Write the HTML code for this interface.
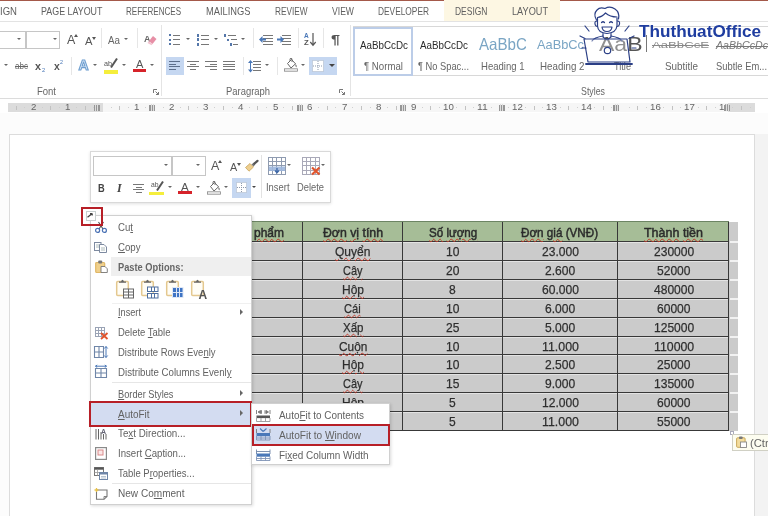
<!DOCTYPE html><html><head><meta charset="utf-8"><title>Word</title><style>
html,body{margin:0;padding:0;background:#fff;}
#root{will-change:transform;position:relative;width:768px;height:516px;overflow:hidden;background:#fff;font-family:"Liberation Sans",sans-serif;}
.a{position:absolute;box-sizing:border-box;}
.t{position:absolute;white-space:nowrap;transform-origin:0 50%;font-family:"Liberation Sans",sans-serif;}
svg{position:absolute;overflow:visible;}
u.w{text-decoration:underline wavy #c0392b;text-decoration-thickness:1px;text-underline-offset:1px;}

</style></head><body><div id="root">
<div class="a" style="left:0px;top:0px;width:444px;height:1.2px;background:#a4594a;"></div>
<div class="a" style="left:560px;top:0px;width:208px;height:1.2px;background:#a4594a;"></div>
<div class="a" style="left:444px;top:0px;width:116px;height:21px;background:#fdf7e3;"></div>
<div class="a" style="left:0px;top:21px;width:768px;height:1px;background:#e3e3e3;"></div>
<div class="a" style="left:0px;top:98px;width:768px;height:1px;background:#dcdcdc;"></div>
<span class="t" style="left:0px;top:4.0px;font-size:11px;line-height:14px;color:#606060;transform:scaleX(0.869);">IGN</span>
<span class="t" style="left:40.5px;top:4.0px;font-size:11px;line-height:14px;color:#606060;transform:scaleX(0.809);">PAGE LAYOUT</span>
<span class="t" style="left:126px;top:4.0px;font-size:11px;line-height:14px;color:#606060;transform:scaleX(0.732);">REFERENCES</span>
<span class="t" style="left:205.5px;top:4.0px;font-size:11px;line-height:14px;color:#606060;transform:scaleX(0.846);">MAILINGS</span>
<span class="t" style="left:274.5px;top:4.0px;font-size:11px;line-height:14px;color:#606060;transform:scaleX(0.749);">REVIEW</span>
<span class="t" style="left:332px;top:4.0px;font-size:11px;line-height:14px;color:#606060;transform:scaleX(0.782);">VIEW</span>
<span class="t" style="left:378px;top:4.0px;font-size:11px;line-height:14px;color:#606060;transform:scaleX(0.758);">DEVELOPER</span>
<span class="t" style="left:455px;top:4.0px;font-size:11px;line-height:14px;color:#606060;transform:scaleX(0.770);">DESIGN</span>
<span class="t" style="left:512px;top:4.0px;font-size:11px;line-height:14px;color:#606060;transform:scaleX(0.833);">LAYOUT</span>
<div class="a" style="left:161px;top:25px;width:1px;height:71px;background:#e4e4e4;"></div>
<div class="a" style="left:350px;top:25px;width:1px;height:71px;background:#e4e4e4;"></div>
<div class="a" style="left:0px;top:31px;width:26px;height:18px;background:#fff;border:1px solid #c6c6c6;border-left:none;"></div>
<div class="a" style="left:26px;top:31px;width:34px;height:18px;background:#fff;border:1px solid #c6c6c6;"></div>
<span class="t" style="left:37px;top:84.0px;font-size:10.5px;line-height:14px;color:#666;transform:scaleX(0.904);">Font</span>
<span class="t" style="left:226px;top:84.0px;font-size:10.5px;line-height:14px;color:#666;transform:scaleX(0.897);">Paragraph</span>
<span class="t" style="left:580.5px;top:84.0px;font-size:10.5px;line-height:14px;color:#666;transform:scaleX(0.839);">Styles</span>
<div class="a" style="left:165.5px;top:57px;width:18.5px;height:18px;background:#c5d7f1;"></div>
<div class="a" style="left:309px;top:57px;width:28px;height:18px;background:#c5d7f1;"></div>
<div class="a" style="left:352.5px;top:26px;width:415.5px;height:50px;background:#fff;border:1px solid #d8d8d8;border-right:none;"></div>
<div class="a" style="left:353px;top:26.5px;width:60px;height:49.0px;background:transparent;border:2.5px solid #bccde8;"></div>
<span class="t" style="left:359.5px;top:38.0px;font-size:11px;line-height:14px;color:#2a2a2a;transform:scaleX(0.892);">AaBbCcDc</span>
<span class="t" style="left:364px;top:58.5px;font-size:10.5px;line-height:14px;color:#666;transform:scaleX(0.920);">¶ Normal</span>
<span class="t" style="left:419.5px;top:38.0px;font-size:11px;line-height:14px;color:#2a2a2a;transform:scaleX(0.892);">AaBbCcDc</span>
<span class="t" style="left:418px;top:58.5px;font-size:10.5px;line-height:14px;color:#666;transform:scaleX(0.886);">¶ No Spac...</span>
<span class="t" style="left:479px;top:33.5px;font-size:16.5px;line-height:21px;color:#7aa5c4;transform:scaleX(0.917);clip-path:inset(0 15% 0 0);">AaBbCc</span>
<span class="t" style="left:481px;top:58.5px;font-size:10.5px;line-height:14px;color:#666;transform:scaleX(0.909);">Heading 1</span>
<span class="t" style="left:537px;top:36.0px;font-size:13px;line-height:17px;color:#7aa5c4;transform:scaleX(0.985);">AaBbCc</span>
<span class="t" style="left:540px;top:58.5px;font-size:10.5px;line-height:14px;color:#666;transform:scaleX(0.930);">Heading 2</span>
<span class="t" style="left:599px;top:30.0px;font-size:21px;line-height:27px;color:#555;transform:scaleX(1.096);">AaB</span>
<div class="a" style="left:645.5px;top:35px;width:1.0px;height:17px;background:#777;"></div>
<span class="t" style="left:614px;top:58.5px;font-size:10.5px;line-height:14px;color:#666;transform:scaleX(0.874);">Title</span>
<span class="t" style="left:652px;top:39.0px;font-size:9px;line-height:12px;color:#888;transform:scaleX(1.460);text-decoration:line-through;">AaBbCcE</span>
<span class="t" style="left:665px;top:58.5px;font-size:10.5px;line-height:14px;color:#666;transform:scaleX(0.942);">Subtitle</span>
<span class="t" style="left:716px;top:38.5px;font-size:10px;line-height:13px;color:#777;transform:scaleX(1.063);font-style:italic;text-decoration:line-through;">AaBbCcDc</span>
<span class="t" style="left:716px;top:58.5px;font-size:10.5px;line-height:14px;color:#666;transform:scaleX(0.892);">Subtle Em...</span>
<div class="a" style="left:17.2px;top:38.25px;width:0;height:0;border-top:2.5px solid #666;border-left:2.5px solid transparent;border-right:2.5px solid transparent;"></div>
<div class="a" style="left:52.5px;top:38.25px;width:0;height:0;border-top:2.5px solid #666;border-left:2.5px solid transparent;border-right:2.5px solid transparent;"></div>
<span class="t" style="left:66.7px;top:31.0px;font-size:13px;line-height:17px;color:#555;transform:scaleX(0.957);">A</span>
<svg style="left:74px;top:34px" width="4" height="3" viewBox="0 0 4 3"><path d="M0 3 L2 0 L4 3z" fill="#555"/></svg>
<span class="t" style="left:85px;top:34.0px;font-size:10.5px;line-height:14px;color:#555;transform:scaleX(1.069);">A</span>
<svg style="left:92px;top:36.5px" width="4" height="3" viewBox="0 0 4 3"><path d="M0 0 L4 0 L2 3z" fill="#555"/></svg>
<div class="a" style="left:101px;top:28px;width:1px;height:20px;background:#e6e6e6;"></div>
<span class="t" style="left:108px;top:32.5px;font-size:11px;line-height:14px;color:#666;transform:scaleX(0.891);">Aa</span>
<div class="a" style="left:123.8px;top:38.25px;width:0;height:0;border-top:2.5px solid #666;border-left:2.5px solid transparent;border-right:2.5px solid transparent;"></div>
<div class="a" style="left:136.5px;top:28px;width:1.0px;height:20px;background:#e6e6e6;"></div>
<svg style="left:144px;top:33px" width="13" height="13" viewBox="0 0 13 13"><text x="0" y="9" font-size="9" font-weight="bold" fill="#666" font-family="Liberation Sans, sans-serif">A</text><path d="M5 8 L9 3 L12.5 6 L8.5 11z" fill="#e78fa6"/><path d="M3.5 10 L5 8 L8.5 11 L7.5 12.3z" fill="#f3c4d0"/></svg>
<div class="a" style="left:169px;top:34px;width:2px;height:2px;background:#5577aa;"></div>
<div class="a" style="left:173px;top:34.5px;width:7px;height:1.0px;background:#777;"></div>
<div class="a" style="left:169px;top:38.5px;width:2px;height:2.0px;background:#5577aa;"></div>
<div class="a" style="left:173px;top:39.0px;width:7px;height:1.0px;background:#777;"></div>
<div class="a" style="left:169px;top:43px;width:2px;height:2px;background:#5577aa;"></div>
<div class="a" style="left:173px;top:43.5px;width:7px;height:1.0px;background:#777;"></div>
<div class="a" style="left:185.8px;top:38.25px;width:0;height:0;border-top:2.5px solid #666;border-left:2.5px solid transparent;border-right:2.5px solid transparent;"></div>
<div class="a" style="left:197px;top:33.5px;width:1.5px;height:3.0px;background:#5577aa;"></div>
<div class="a" style="left:201px;top:34.5px;width:8px;height:1.0px;background:#777;"></div>
<div class="a" style="left:197px;top:38.0px;width:1.5px;height:3.0px;background:#5577aa;"></div>
<div class="a" style="left:201px;top:39.0px;width:8px;height:1.0px;background:#777;"></div>
<div class="a" style="left:197px;top:42.5px;width:1.5px;height:3.0px;background:#5577aa;"></div>
<div class="a" style="left:201px;top:43.5px;width:8px;height:1.0px;background:#777;"></div>
<div class="a" style="left:214.2px;top:38.25px;width:0;height:0;border-top:2.5px solid #666;border-left:2.5px solid transparent;border-right:2.5px solid transparent;"></div>
<div class="a" style="left:224px;top:34px;width:1.5px;height:2.5px;background:#5577aa;"></div>
<div class="a" style="left:228px;top:34.5px;width:8px;height:1.0px;background:#777;"></div>
<div class="a" style="left:227px;top:38.5px;width:1.5px;height:2.5px;background:#5577aa;"></div>
<div class="a" style="left:231px;top:39px;width:6px;height:1px;background:#777;"></div>
<div class="a" style="left:230px;top:43px;width:1.5px;height:2.5px;background:#5577aa;"></div>
<div class="a" style="left:233px;top:43.5px;width:5px;height:1.0px;background:#777;"></div>
<div class="a" style="left:240.5px;top:38.25px;width:0;height:0;border-top:2.5px solid #666;border-left:2.5px solid transparent;border-right:2.5px solid transparent;"></div>
<div class="a" style="left:252.5px;top:28px;width:1.0px;height:20px;background:#e6e6e6;"></div>
<div class="a" style="left:263px;top:35.0px;width:10px;height:1.0px;background:#777;"></div>
<div class="a" style="left:263px;top:38.0px;width:10px;height:1.0px;background:#777;"></div>
<div class="a" style="left:263px;top:41.0px;width:10px;height:1.0px;background:#777;"></div>
<div class="a" style="left:263px;top:44.0px;width:10px;height:1.0px;background:#777;"></div>
<svg style="left:259px;top:36px" width="7" height="7" viewBox="0 0 7 7"><path d="M0 3.5 L3.5 0 L3.5 2.5 L7 2.5 L7 4.5 L3.5 4.5 L3.5 7z" fill="#4a78b8"/></svg>
<div class="a" style="left:281.5px;top:35.0px;width:9.5px;height:1.0px;background:#777;"></div>
<div class="a" style="left:281.5px;top:38.0px;width:9.5px;height:1.0px;background:#777;"></div>
<div class="a" style="left:281.5px;top:41.0px;width:9.5px;height:1.0px;background:#777;"></div>
<div class="a" style="left:281.5px;top:44.0px;width:9.5px;height:1.0px;background:#777;"></div>
<svg style="left:277px;top:36px" width="7" height="7" viewBox="0 0 7 7"><path d="M7 3.5 L3.5 0 L3.5 2.5 L0 2.5 L0 4.5 L3.5 4.5 L3.5 7z" fill="#4a78b8"/></svg>
<div class="a" style="left:297.5px;top:28px;width:1.0px;height:20px;background:#e6e6e6;"></div>
<span class="t" style="left:304.3px;top:31.0px;font-size:7.5px;line-height:10px;color:#4a78b8;transform:scaleX(0.867);font-weight:bold;">A</span>
<span class="t" style="left:304.3px;top:38.0px;font-size:7.5px;line-height:10px;color:#555;transform:scaleX(1.023);font-weight:bold;">Z</span>
<svg style="left:310px;top:33px" width="6" height="13" viewBox="0 0 6 13"><path d="M3 0 V12 M0.3 9 L3 12.3 L5.7 9" stroke="#555" stroke-width="1.2" fill="none"/></svg>
<div class="a" style="left:322.5px;top:28px;width:1.0px;height:20px;background:#e6e6e6;"></div>
<span class="t" style="left:331px;top:31.0px;font-size:13px;line-height:17px;color:#555;transform:scaleX(1.244);font-weight:bold;">¶</span>
<div class="a" style="left:4.2px;top:64.45px;width:0;height:0;border-top:2.5px solid #666;border-left:2.5px solid transparent;border-right:2.5px solid transparent;"></div>
<span class="t" style="left:15px;top:60.0px;font-size:9.5px;line-height:12px;color:#666;transform:scaleX(0.848);text-decoration:line-through;">abc</span>
<span class="t" style="left:35px;top:59.0px;font-size:11px;line-height:14px;color:#555;transform:scaleX(0.980);font-weight:bold;">x</span>
<span class="t" style="left:41.5px;top:65.5px;font-size:6px;line-height:8px;color:#4a78b8;transform:scaleX(0.957);">2</span>
<span class="t" style="left:53.7px;top:59.0px;font-size:11px;line-height:14px;color:#555;transform:scaleX(0.947);font-weight:bold;">x</span>
<span class="t" style="left:60px;top:57.5px;font-size:6px;line-height:8px;color:#4a78b8;transform:scaleX(0.897);">2</span>
<div class="a" style="left:71px;top:57px;width:1px;height:18px;background:#e6e6e6;"></div>
<svg style="left:78px;top:58px" width="12" height="14" viewBox="0 0 12 14"><text x="0.5" y="11.5" font-size="14" font-weight="bold" fill="#e8f1fb" stroke="#6f9fd0" stroke-width="1.1" font-family="Liberation Sans, sans-serif">A</text></svg>
<div class="a" style="left:92.5px;top:64.45px;width:0;height:0;border-top:2.5px solid #666;border-left:2.5px solid transparent;border-right:2.5px solid transparent;"></div>
<span class="t" style="left:104px;top:58.5px;font-size:8px;line-height:10px;color:#555;transform:scaleX(0.898);">ab</span>
<svg style="left:109px;top:58px" width="9" height="11" viewBox="0 0 9 11"><path d="M8 0.5 L2 9.5" stroke="#555" stroke-width="2"/></svg>
<div class="a" style="left:104px;top:69.5px;width:13.5px;height:4.0px;background:#f5ee3c;"></div>
<div class="a" style="left:122.2px;top:64.45px;width:0;height:0;border-top:2.5px solid #666;border-left:2.5px solid transparent;border-right:2.5px solid transparent;"></div>
<span class="t" style="left:135.8px;top:57.0px;font-size:11px;line-height:14px;color:#555;transform:scaleX(1.008);">A</span>
<div class="a" style="left:132.5px;top:68.7px;width:13.300000000000011px;height:3.0999999999999943px;background:#d6232a;"></div>
<div class="a" style="left:150.3px;top:64.45px;width:0;height:0;border-top:2.5px solid #666;border-left:2.5px solid transparent;border-right:2.5px solid transparent;"></div>
<svg style="left:152.5px;top:88.5px" width="6" height="6" viewBox="0 0 6 6"><path d="M0.5 4 V0.5 H4" stroke="#777" fill="none" stroke-width="1"/><path d="M2.5 2.5 L5.5 5.5 M5.5 3 V5.5 H3" stroke="#777" fill="none" stroke-width="1"/></svg>
<svg style="left:339px;top:88.5px" width="6" height="6" viewBox="0 0 6 6"><path d="M0.5 4 V0.5 H4" stroke="#777" fill="none" stroke-width="1"/><path d="M2.5 2.5 L5.5 5.5 M5.5 3 V5.5 H3" stroke="#777" fill="none" stroke-width="1"/></svg>
<div class="a" style="left:168.7px;top:60.5px;width:11.600000000000023px;height:1.0px;background:#5d6f8c;"></div>
<div class="a" style="left:168.7px;top:66.2px;width:11.600000000000023px;height:1.0px;background:#5d6f8c;"></div>
<div class="a" style="left:168.7px;top:63.5px;width:7.300000000000011px;height:1.0px;background:#5d6f8c;"></div>
<div class="a" style="left:168.7px;top:69.0px;width:7.300000000000011px;height:1.0px;background:#5d6f8c;"></div>
<div class="a" style="left:186.7px;top:60.5px;width:12.0px;height:1.0px;background:#777;"></div>
<div class="a" style="left:186.7px;top:66.2px;width:12.0px;height:1.0px;background:#777;"></div>
<div class="a" style="left:189.5px;top:63.5px;width:6.5px;height:1.0px;background:#777;"></div>
<div class="a" style="left:189.5px;top:69.0px;width:6.5px;height:1.0px;background:#777;"></div>
<div class="a" style="left:205px;top:60.5px;width:11.699999999999989px;height:1.0px;background:#777;"></div>
<div class="a" style="left:205px;top:66.2px;width:11.699999999999989px;height:1.0px;background:#777;"></div>
<div class="a" style="left:210px;top:63.5px;width:6.699999999999989px;height:1.0px;background:#777;"></div>
<div class="a" style="left:210px;top:69.0px;width:6.699999999999989px;height:1.0px;background:#777;"></div>
<div class="a" style="left:223.3px;top:60.5px;width:12.0px;height:1.0px;background:#777;"></div>
<div class="a" style="left:223.3px;top:63.5px;width:12.0px;height:1.0px;background:#777;"></div>
<div class="a" style="left:223.3px;top:66.2px;width:12.0px;height:1.0px;background:#777;"></div>
<div class="a" style="left:223.3px;top:69.0px;width:12.0px;height:1.0px;background:#777;"></div>
<div class="a" style="left:242.5px;top:57px;width:1.0px;height:18px;background:#e6e6e6;"></div>
<div class="a" style="left:253px;top:60.5px;width:8px;height:1.0px;background:#777;"></div>
<div class="a" style="left:253px;top:63.5px;width:8px;height:1.0px;background:#777;"></div>
<div class="a" style="left:253px;top:66.5px;width:8px;height:1.0px;background:#777;"></div>
<div class="a" style="left:253px;top:69.5px;width:8px;height:1.0px;background:#777;"></div>
<svg style="left:247.5px;top:59.5px" width="5" height="12.5" viewBox="0 0 5 12.5"><path d="M2.5 0 L5 3 H0z M2.5 12.5 L5 9.5 H0z" fill="#4a78b8"/><path d="M2.5 2 V10" stroke="#4a78b8" stroke-width="1"/></svg>
<div class="a" style="left:264.5px;top:64.45px;width:0;height:0;border-top:2.5px solid #666;border-left:2.5px solid transparent;border-right:2.5px solid transparent;"></div>
<div class="a" style="left:276.5px;top:57px;width:1.0px;height:18px;background:#e6e6e6;"></div>
<svg style="left:283.5px;top:57.5px" width="14" height="14" viewBox="0 0 14 14"><path d="M3.5 5.5 L7.5 1.5 L11.5 5.8 L7 10 z" fill="#fff" stroke="#666" stroke-width="1"/><path d="M6 3 V0.8 Q7 -0.2 8 0.8 V4" stroke="#666" fill="none" stroke-width="0.9"/><path d="M11.5 5.8 Q13.5 8 12.2 9.5 Q11 8.5 11.5 5.8z" fill="#666"/><rect x="0.5" y="10.8" width="13" height="2.4" fill="#f4f4f4" stroke="#888" stroke-width="0.8"/></svg>
<div class="a" style="left:301.0px;top:64.45px;width:0;height:0;border-top:2.5px solid #666;border-left:2.5px solid transparent;border-right:2.5px solid transparent;"></div>
<svg style="left:312px;top:59.5px" width="12" height="12" viewBox="0 0 12 12"><rect x="0.5" y="0.5" width="11" height="11" fill="#fff" stroke="#aab4c4" stroke-width="1" stroke-dasharray="1 1"/><path d="M6.0 1 V11 M1 6.0 H11" stroke="#8d99ad" stroke-width="1" stroke-dasharray="1 1"/></svg>
<div class="a" style="left:328.8px;top:64.2px;width:0;height:0;border-top:3px solid #444;border-left:3px solid transparent;border-right:3px solid transparent;"></div>
<svg style="left:580px;top:4px" width="58" height="62" viewBox="0 0 58 62"><g fill="none" stroke="#2b3f86" stroke-width="1.2" stroke-linecap="round" stroke-linejoin="round">
<path d="M16.5 16 Q13 10 17 6 Q20 2.5 25 4.5 Q30 1.5 35 5 Q40 8.5 38.5 15" />
<path d="M17.5 13.5 Q22 13 25.5 9 Q30 13 37 13" />
<path d="M17.5 14 V22 Q18 29 27 29.5 Q36 29 37 22 V14" fill="#fff"/>
<path d="M17 17 Q14.5 17 15 20 Q15.5 22.5 17.5 22.5 M37.5 17 Q40 17 39.5 20 Q39 22.5 37 22.5"/>
<path d="M22 23 H32 Q31.5 27.5 27 27.5 Q22.500 27.5 22 23z" fill="#fff"/>
<path d="M21.5 18.500 Q23 17 24.5 18.500 M29.500 18.500 Q31 17 32.500 18.500"/>
<path d="M23 29.500 V33 L27 36 L31 33 V29.500"/>
<path d="M23 32 Q14 33.500 12 37 M31 32 Q40 33.500 42 37"/>
<path d="M4 35 L47 35 L50 58 L8 58 Z" fill="#fff" fill-opacity="0.35"/>
<path d="M6 60 H52" stroke-width="1.8"/>
<circle cx="27.500" cy="46.500" r="3.200" fill="#fff"/>
<path d="M5 22 L9 27 M0 32 L5 34.500 M2 44 H6 M49 22 L45 27 M54 32 L49 34.500 M52 44 H56"/>
</g></svg>
<span class="t" style="left:638.5px;top:21.0px;font-size:16.5px;line-height:21px;color:#1f3da0;transform:scaleX(1.040);font-weight:bold;">ThuthuatOffice</span>
<div class="a" style="left:7.5px;top:102.5px;width:747.5px;height:9.5px;background:#f6f6f6;"></div>
<div class="a" style="left:7.5px;top:102.5px;width:95.5px;height:9.5px;background:#dcdcdc;"></div>
<div class="a" style="left:728px;top:102.5px;width:27px;height:9.5px;background:#dcdcdc;"></div>
<span class="t" style="left:30.839999999999993px;top:102.0px;font-size:8.5px;line-height:11px;color:#666;transform:scaleX(1.141);">2</span>
<span class="t" style="left:65.36999999999999px;top:102.0px;font-size:8.5px;line-height:11px;color:#666;transform:scaleX(1.141);">1</span>
<span class="t" style="left:134.43px;top:102.0px;font-size:8.5px;line-height:11px;color:#666;transform:scaleX(1.141);">1</span>
<span class="t" style="left:168.96px;top:102.0px;font-size:8.5px;line-height:11px;color:#666;transform:scaleX(1.141);">2</span>
<span class="t" style="left:203.49px;top:102.0px;font-size:8.5px;line-height:11px;color:#666;transform:scaleX(1.141);">3</span>
<span class="t" style="left:238.02px;top:102.0px;font-size:8.5px;line-height:11px;color:#666;transform:scaleX(1.141);">4</span>
<span class="t" style="left:272.55px;top:102.0px;font-size:8.5px;line-height:11px;color:#666;transform:scaleX(1.141);">5</span>
<span class="t" style="left:307.08px;top:102.0px;font-size:8.5px;line-height:11px;color:#666;transform:scaleX(1.141);">6</span>
<span class="t" style="left:341.61px;top:102.0px;font-size:8.5px;line-height:11px;color:#666;transform:scaleX(1.141);">7</span>
<span class="t" style="left:376.14000000000004px;top:102.0px;font-size:8.5px;line-height:11px;color:#666;transform:scaleX(1.141);">8</span>
<span class="t" style="left:410.67px;top:102.0px;font-size:8.5px;line-height:11px;color:#666;transform:scaleX(1.141);">9</span>
<span class="t" style="left:442.5px;top:102.0px;font-size:8.5px;line-height:11px;color:#666;transform:scaleX(1.141);">10</span>
<span class="t" style="left:477.0300000000001px;top:102.0px;font-size:8.5px;line-height:11px;color:#666;transform:scaleX(1.223);">11</span>
<span class="t" style="left:511.56000000000006px;top:102.0px;font-size:8.5px;line-height:11px;color:#666;transform:scaleX(1.141);">12</span>
<span class="t" style="left:546.09px;top:102.0px;font-size:8.5px;line-height:11px;color:#666;transform:scaleX(1.141);">13</span>
<span class="t" style="left:580.62px;top:102.0px;font-size:8.5px;line-height:11px;color:#666;transform:scaleX(1.141);">14</span>
<span class="t" style="left:649.6800000000001px;top:102.0px;font-size:8.5px;line-height:11px;color:#666;transform:scaleX(1.141);">16</span>
<span class="t" style="left:684.21px;top:102.0px;font-size:8.5px;line-height:11px;color:#666;transform:scaleX(1.141);">17</span>
<span class="t" style="left:718.74px;top:102.0px;font-size:8.5px;line-height:11px;color:#666;transform:scaleX(1.141);">18</span>
<div class="a" style="left:15.774999999999991px;top:105.5px;width:1.0px;height:4.0px;background:#c2c2c2;"></div>
<div class="a" style="left:24.4075px;top:107px;width:1.0px;height:1px;background:#cfcfcf;"></div>
<div class="a" style="left:41.67249999999999px;top:107px;width:1.0px;height:1px;background:#cfcfcf;"></div>
<div class="a" style="left:50.30499999999999px;top:105.5px;width:1.0px;height:4.0px;background:#c2c2c2;"></div>
<div class="a" style="left:58.93749999999999px;top:107px;width:1.0px;height:1px;background:#cfcfcf;"></div>
<div class="a" style="left:76.20249999999999px;top:107px;width:1.0px;height:1px;background:#cfcfcf;"></div>
<div class="a" style="left:84.835px;top:105.5px;width:1.0px;height:4.0px;background:#c2c2c2;"></div>
<div class="a" style="left:93.4675px;top:107px;width:1.0px;height:1px;background:#cfcfcf;"></div>
<div class="a" style="left:110.73249999999999px;top:107px;width:1.0px;height:1px;background:#cfcfcf;"></div>
<div class="a" style="left:119.365px;top:105.5px;width:1.0px;height:4.0px;background:#c2c2c2;"></div>
<div class="a" style="left:127.9975px;top:107px;width:1.0px;height:1px;background:#cfcfcf;"></div>
<div class="a" style="left:145.2625px;top:107px;width:1.0px;height:1px;background:#cfcfcf;"></div>
<div class="a" style="left:153.89499999999998px;top:105.5px;width:1.0px;height:4.0px;background:#c2c2c2;"></div>
<div class="a" style="left:162.5275px;top:107px;width:1.0px;height:1px;background:#cfcfcf;"></div>
<div class="a" style="left:179.7925px;top:107px;width:1.0px;height:1px;background:#cfcfcf;"></div>
<div class="a" style="left:188.425px;top:105.5px;width:1.0px;height:4.0px;background:#c2c2c2;"></div>
<div class="a" style="left:197.0575px;top:107px;width:1.0px;height:1px;background:#cfcfcf;"></div>
<div class="a" style="left:214.3225px;top:107px;width:1.0px;height:1px;background:#cfcfcf;"></div>
<div class="a" style="left:222.95499999999998px;top:105.5px;width:1.0px;height:4.0px;background:#c2c2c2;"></div>
<div class="a" style="left:231.5875px;top:107px;width:1.0px;height:1px;background:#cfcfcf;"></div>
<div class="a" style="left:248.8525px;top:107px;width:1.0px;height:1px;background:#cfcfcf;"></div>
<div class="a" style="left:257.485px;top:105.5px;width:1.0px;height:4.0px;background:#c2c2c2;"></div>
<div class="a" style="left:266.1175px;top:107px;width:1.0px;height:1px;background:#cfcfcf;"></div>
<div class="a" style="left:283.3825px;top:107px;width:1.0px;height:1px;background:#cfcfcf;"></div>
<div class="a" style="left:292.015px;top:105.5px;width:1.0px;height:4.0px;background:#c2c2c2;"></div>
<div class="a" style="left:300.64750000000004px;top:107px;width:1.0px;height:1px;background:#cfcfcf;"></div>
<div class="a" style="left:317.9125px;top:107px;width:1.0px;height:1px;background:#cfcfcf;"></div>
<div class="a" style="left:326.54499999999996px;top:105.5px;width:1.0px;height:4.0px;background:#c2c2c2;"></div>
<div class="a" style="left:335.1775px;top:107px;width:1.0px;height:1px;background:#cfcfcf;"></div>
<div class="a" style="left:352.4425px;top:107px;width:1.0px;height:1px;background:#cfcfcf;"></div>
<div class="a" style="left:361.07500000000005px;top:105.5px;width:1.0px;height:4.0px;background:#c2c2c2;"></div>
<div class="a" style="left:369.7075px;top:107px;width:1.0px;height:1px;background:#cfcfcf;"></div>
<div class="a" style="left:386.97249999999997px;top:107px;width:1.0px;height:1px;background:#cfcfcf;"></div>
<div class="a" style="left:395.605px;top:105.5px;width:1.0px;height:4.0px;background:#c2c2c2;"></div>
<div class="a" style="left:404.23749999999995px;top:107px;width:1.0px;height:1px;background:#cfcfcf;"></div>
<div class="a" style="left:421.50250000000005px;top:107px;width:1.0px;height:1px;background:#cfcfcf;"></div>
<div class="a" style="left:430.135px;top:105.5px;width:1.0px;height:4.0px;background:#c2c2c2;"></div>
<div class="a" style="left:438.76750000000004px;top:107px;width:1.0px;height:1px;background:#cfcfcf;"></div>
<div class="a" style="left:456.0325px;top:107px;width:1.0px;height:1px;background:#cfcfcf;"></div>
<div class="a" style="left:464.66499999999996px;top:105.5px;width:1.0px;height:4.0px;background:#c2c2c2;"></div>
<div class="a" style="left:473.2975px;top:107px;width:1.0px;height:1px;background:#cfcfcf;"></div>
<div class="a" style="left:490.5625px;top:107px;width:1.0px;height:1px;background:#cfcfcf;"></div>
<div class="a" style="left:499.19500000000005px;top:105.5px;width:1.0px;height:4.0px;background:#c2c2c2;"></div>
<div class="a" style="left:507.8275px;top:107px;width:1.0px;height:1px;background:#cfcfcf;"></div>
<div class="a" style="left:525.0925px;top:107px;width:1.0px;height:1px;background:#cfcfcf;"></div>
<div class="a" style="left:533.725px;top:105.5px;width:1.0px;height:4.0px;background:#c2c2c2;"></div>
<div class="a" style="left:542.3575px;top:107px;width:1.0px;height:1px;background:#cfcfcf;"></div>
<div class="a" style="left:559.6225000000001px;top:107px;width:1.0px;height:1px;background:#cfcfcf;"></div>
<div class="a" style="left:568.255px;top:105.5px;width:1.0px;height:4.0px;background:#c2c2c2;"></div>
<div class="a" style="left:576.8875px;top:107px;width:1.0px;height:1px;background:#cfcfcf;"></div>
<div class="a" style="left:594.1525px;top:107px;width:1.0px;height:1px;background:#cfcfcf;"></div>
<div class="a" style="left:602.785px;top:105.5px;width:1.0px;height:4.0px;background:#c2c2c2;"></div>
<div class="a" style="left:611.4175px;top:107px;width:1.0px;height:1px;background:#cfcfcf;"></div>
<div class="a" style="left:628.6825px;top:107px;width:1.0px;height:1px;background:#cfcfcf;"></div>
<div class="a" style="left:637.315px;top:105.5px;width:1.0px;height:4.0px;background:#c2c2c2;"></div>
<div class="a" style="left:645.9475px;top:107px;width:1.0px;height:1px;background:#cfcfcf;"></div>
<div class="a" style="left:663.2125000000001px;top:107px;width:1.0px;height:1px;background:#cfcfcf;"></div>
<div class="a" style="left:671.845px;top:105.5px;width:1.0px;height:4.0px;background:#c2c2c2;"></div>
<div class="a" style="left:680.4775000000001px;top:107px;width:1.0px;height:1px;background:#cfcfcf;"></div>
<div class="a" style="left:697.7425000000001px;top:107px;width:1.0px;height:1px;background:#cfcfcf;"></div>
<div class="a" style="left:706.375px;top:105.5px;width:1.0px;height:4.0px;background:#c2c2c2;"></div>
<div class="a" style="left:715.0075px;top:107px;width:1.0px;height:1px;background:#cfcfcf;"></div>
<div class="a" style="left:732.2725px;top:107px;width:1.0px;height:1px;background:#cfcfcf;"></div>
<div class="a" style="left:740.9050000000001px;top:105.5px;width:1.0px;height:4.0px;background:#c2c2c2;"></div>
<div class="a" style="left:749.5375px;top:107px;width:1.0px;height:1px;background:#cfcfcf;"></div>
<div class="a" style="left:93.5px;top:104.5px;width:6.0px;height:6.0px;background:#969696;"></div>
<div class="a" style="left:95.0px;top:104px;width:1.0px;height:7px;background:#ddd;"></div>
<div class="a" style="left:97.0px;top:104px;width:1.0px;height:7px;background:#ddd;"></div>
<div class="a" style="left:149px;top:104.5px;width:6px;height:6.0px;background:#969696;"></div>
<div class="a" style="left:150.5px;top:104px;width:1.0px;height:7px;background:#ddd;"></div>
<div class="a" style="left:152.5px;top:104px;width:1.0px;height:7px;background:#ddd;"></div>
<div class="a" style="left:297px;top:104.5px;width:6px;height:6.0px;background:#969696;"></div>
<div class="a" style="left:298.5px;top:104px;width:1.0px;height:7px;background:#ddd;"></div>
<div class="a" style="left:300.5px;top:104px;width:1.0px;height:7px;background:#ddd;"></div>
<div class="a" style="left:400px;top:104.5px;width:6px;height:6.0px;background:#969696;"></div>
<div class="a" style="left:401.5px;top:104px;width:1.0px;height:7px;background:#ddd;"></div>
<div class="a" style="left:403.5px;top:104px;width:1.0px;height:7px;background:#ddd;"></div>
<div class="a" style="left:498.5px;top:104.5px;width:6.0px;height:6.0px;background:#969696;"></div>
<div class="a" style="left:500.0px;top:104px;width:1.0px;height:7px;background:#ddd;"></div>
<div class="a" style="left:502.0px;top:104px;width:1.0px;height:7px;background:#ddd;"></div>
<div class="a" style="left:613px;top:104.5px;width:6px;height:6.0px;background:#969696;"></div>
<div class="a" style="left:614.5px;top:104px;width:1.0px;height:7px;background:#ddd;"></div>
<div class="a" style="left:616.5px;top:104px;width:1.0px;height:7px;background:#ddd;"></div>
<div class="a" style="left:724px;top:104.5px;width:6px;height:6.0px;background:#969696;"></div>
<div class="a" style="left:725.5px;top:104px;width:1.0px;height:7px;background:#ddd;"></div>
<div class="a" style="left:727.5px;top:104px;width:1.0px;height:7px;background:#ddd;"></div>
<div class="a" style="left:0px;top:113px;width:768px;height:403px;background:#fcfcfc;"></div>
<div class="a" style="left:9px;top:134px;width:746px;height:396px;background:#fff;border:1px solid #dcdcdc;"></div>
<div class="a" style="left:755px;top:134px;width:13px;height:382px;background:#f3f3f3;"></div>
<div class="a" style="left:200px;top:222px;width:529px;height:19px;background:#a6bd97;"></div>
<div class="a" style="left:200px;top:241px;width:537.5px;height:189.5px;background:#cbcbcb;"></div>
<div class="a" style="left:729px;top:222px;width:8.5px;height:19px;background:#cbcbcb;"></div>
<div class="a" style="left:200px;top:221.3px;width:529px;height:1.1999999999999886px;background:#6d8564;"></div>
<div class="a" style="left:200px;top:240.5px;width:529px;height:1.0999999999999943px;background:#383838;"></div>
<div class="a" style="left:200px;top:241.6px;width:529px;height:1.0px;background:#e3e3e3;"></div>
<div class="a" style="left:200px;top:259.5px;width:529px;height:1.1000000000000227px;background:#383838;"></div>
<div class="a" style="left:200px;top:260.6px;width:529px;height:1.0px;background:#e3e3e3;"></div>
<div class="a" style="left:200px;top:278.5px;width:529px;height:1.1000000000000227px;background:#383838;"></div>
<div class="a" style="left:200px;top:279.6px;width:529px;height:1.0px;background:#e3e3e3;"></div>
<div class="a" style="left:200px;top:297.5px;width:529px;height:1.1000000000000227px;background:#383838;"></div>
<div class="a" style="left:200px;top:298.6px;width:529px;height:1.0px;background:#e3e3e3;"></div>
<div class="a" style="left:200px;top:316.5px;width:529px;height:1.1000000000000227px;background:#383838;"></div>
<div class="a" style="left:200px;top:317.6px;width:529px;height:1.0px;background:#e3e3e3;"></div>
<div class="a" style="left:200px;top:335.5px;width:529px;height:1.1000000000000227px;background:#383838;"></div>
<div class="a" style="left:200px;top:336.6px;width:529px;height:1.0px;background:#e3e3e3;"></div>
<div class="a" style="left:200px;top:354.0px;width:529px;height:1.1000000000000227px;background:#383838;"></div>
<div class="a" style="left:200px;top:355.1px;width:529px;height:1.0px;background:#e3e3e3;"></div>
<div class="a" style="left:200px;top:373.0px;width:529px;height:1.1000000000000227px;background:#383838;"></div>
<div class="a" style="left:200px;top:374.1px;width:529px;height:1.0px;background:#e3e3e3;"></div>
<div class="a" style="left:200px;top:391.5px;width:529px;height:1.1000000000000227px;background:#383838;"></div>
<div class="a" style="left:200px;top:392.6px;width:529px;height:1.0px;background:#e3e3e3;"></div>
<div class="a" style="left:200px;top:410.5px;width:529px;height:1.1000000000000227px;background:#383838;"></div>
<div class="a" style="left:200px;top:411.6px;width:529px;height:1.0px;background:#e3e3e3;"></div>
<div class="a" style="left:200px;top:429.5px;width:529px;height:1.1000000000000227px;background:#383838;"></div>
<div class="a" style="left:729.5px;top:240.5px;width:8.0px;height:2.0999999999999943px;background:#f2f2f2;"></div>
<div class="a" style="left:729.5px;top:259.5px;width:8.0px;height:2.1000000000000227px;background:#f2f2f2;"></div>
<div class="a" style="left:729.5px;top:278.5px;width:8.0px;height:2.1000000000000227px;background:#f2f2f2;"></div>
<div class="a" style="left:729.5px;top:297.5px;width:8.0px;height:2.1000000000000227px;background:#f2f2f2;"></div>
<div class="a" style="left:729.5px;top:316.5px;width:8.0px;height:2.1000000000000227px;background:#f2f2f2;"></div>
<div class="a" style="left:729.5px;top:335.5px;width:8.0px;height:2.1000000000000227px;background:#f2f2f2;"></div>
<div class="a" style="left:729.5px;top:354.0px;width:8.0px;height:2.1000000000000227px;background:#f2f2f2;"></div>
<div class="a" style="left:729.5px;top:373.0px;width:8.0px;height:2.1000000000000227px;background:#f2f2f2;"></div>
<div class="a" style="left:729.5px;top:391.5px;width:8.0px;height:2.1000000000000227px;background:#f2f2f2;"></div>
<div class="a" style="left:729.5px;top:410.5px;width:8.0px;height:2.1000000000000227px;background:#f2f2f2;"></div>
<div class="a" style="left:302px;top:222px;width:1px;height:208.5px;background:#383838;"></div>
<div class="a" style="left:402px;top:222px;width:1px;height:208.5px;background:#383838;"></div>
<div class="a" style="left:502px;top:222px;width:1px;height:208.5px;background:#383838;"></div>
<div class="a" style="left:617px;top:222px;width:1px;height:208.5px;background:#383838;"></div>
<div class="a" style="left:728px;top:222px;width:1px;height:208.5px;background:#383838;"></div>
<span class="t" style="left:254px;top:223.5px;font-size:13px;line-height:17px;color:#2c2c2c;transform:scaleX(0.922);-webkit-text-stroke:0.5px #2c2c2c;"><u class="w">phẩm</u></span>
<span class="t" style="left:323px;top:223.5px;font-size:13px;line-height:17px;color:#2c2c2c;transform:scaleX(0.945);-webkit-text-stroke:0.5px #2c2c2c;"><u class="w">Đơn</u> <u class="w">vị</u> <u class="w">tính</u></span>
<span class="t" style="left:428.75px;top:223.5px;font-size:13px;line-height:17px;color:#2c2c2c;transform:scaleX(0.892);-webkit-text-stroke:0.5px #2c2c2c;"><u class="w">Số</u> <u class="w">lượng</u></span>
<span class="t" style="left:521px;top:223.5px;font-size:13px;line-height:17px;color:#2c2c2c;transform:scaleX(0.897);-webkit-text-stroke:0.5px #2c2c2c;"><u class="w">Đơn</u> <u class="w">giá</u> (VNĐ)</span>
<span class="t" style="left:644px;top:223.5px;font-size:13px;line-height:17px;color:#2c2c2c;transform:scaleX(0.960);-webkit-text-stroke:0.5px #2c2c2c;"><u class="w">Thành</u> <u class="w">tiền</u></span>
<span class="t" style="left:335.05px;top:242.8px;font-size:13.5px;line-height:18px;color:#2e2e2e;transform:scaleX(0.892);-webkit-text-stroke:0.25px #2e2e2e;"><u class="w">Quyển</u></span>
<span class="t" style="left:446.1px;top:242.8px;font-size:13.5px;line-height:18px;color:#2e2e2e;transform:scaleX(0.891);-webkit-text-stroke:0.25px #2e2e2e;">10</span>
<span class="t" style="left:541.75px;top:242.8px;font-size:13.5px;line-height:18px;color:#2e2e2e;transform:scaleX(0.894);-webkit-text-stroke:0.25px #2e2e2e;">23.000</span>
<span class="t" style="left:654.1px;top:242.8px;font-size:13.5px;line-height:18px;color:#2e2e2e;transform:scaleX(0.892);-webkit-text-stroke:0.25px #2e2e2e;">230000</span>
<span class="t" style="left:343.05px;top:261.8px;font-size:13.5px;line-height:18px;color:#2e2e2e;transform:scaleX(0.812);-webkit-text-stroke:0.25px #2e2e2e;"><u class="w">Cây</u></span>
<span class="t" style="left:446.1px;top:261.8px;font-size:13.5px;line-height:18px;color:#2e2e2e;transform:scaleX(0.891);-webkit-text-stroke:0.25px #2e2e2e;">20</span>
<span class="t" style="left:545.1px;top:261.8px;font-size:13.5px;line-height:18px;color:#2e2e2e;transform:scaleX(0.894);-webkit-text-stroke:0.25px #2e2e2e;">2.600</span>
<span class="t" style="left:657.45px;top:261.8px;font-size:13.5px;line-height:18px;color:#2e2e2e;transform:scaleX(0.892);-webkit-text-stroke:0.25px #2e2e2e;">52000</span>
<span class="t" style="left:341.8px;top:280.8px;font-size:13.5px;line-height:18px;color:#2e2e2e;transform:scaleX(0.888);-webkit-text-stroke:0.25px #2e2e2e;"><u class="w">Hộp</u></span>
<span class="t" style="left:449.45px;top:280.8px;font-size:13.5px;line-height:18px;color:#2e2e2e;transform:scaleX(0.891);-webkit-text-stroke:0.25px #2e2e2e;">8</span>
<span class="t" style="left:541.75px;top:280.8px;font-size:13.5px;line-height:18px;color:#2e2e2e;transform:scaleX(0.894);-webkit-text-stroke:0.25px #2e2e2e;">60.000</span>
<span class="t" style="left:654.1px;top:280.8px;font-size:13.5px;line-height:18px;color:#2e2e2e;transform:scaleX(0.892);-webkit-text-stroke:0.25px #2e2e2e;">480000</span>
<span class="t" style="left:344.45px;top:299.8px;font-size:13.5px;line-height:18px;color:#2e2e2e;transform:scaleX(0.824);-webkit-text-stroke:0.25px #2e2e2e;"><u class="w">Cái</u></span>
<span class="t" style="left:446.1px;top:299.8px;font-size:13.5px;line-height:18px;color:#2e2e2e;transform:scaleX(0.891);-webkit-text-stroke:0.25px #2e2e2e;">10</span>
<span class="t" style="left:545.1px;top:299.8px;font-size:13.5px;line-height:18px;color:#2e2e2e;transform:scaleX(0.894);-webkit-text-stroke:0.25px #2e2e2e;">6.000</span>
<span class="t" style="left:657.45px;top:299.8px;font-size:13.5px;line-height:18px;color:#2e2e2e;transform:scaleX(0.892);-webkit-text-stroke:0.25px #2e2e2e;">60000</span>
<span class="t" style="left:342.55px;top:318.8px;font-size:13.5px;line-height:18px;color:#2e2e2e;transform:scaleX(0.853);-webkit-text-stroke:0.25px #2e2e2e;"><u class="w">Xấp</u></span>
<span class="t" style="left:446.1px;top:318.8px;font-size:13.5px;line-height:18px;color:#2e2e2e;transform:scaleX(0.891);-webkit-text-stroke:0.25px #2e2e2e;">25</span>
<span class="t" style="left:545.1px;top:318.8px;font-size:13.5px;line-height:18px;color:#2e2e2e;transform:scaleX(0.894);-webkit-text-stroke:0.25px #2e2e2e;">5.000</span>
<span class="t" style="left:654.1px;top:318.8px;font-size:13.5px;line-height:18px;color:#2e2e2e;transform:scaleX(0.892);-webkit-text-stroke:0.25px #2e2e2e;">125000</span>
<span class="t" style="left:338.6px;top:337.6px;font-size:13.5px;line-height:18px;color:#2e2e2e;transform:scaleX(0.880);-webkit-text-stroke:0.25px #2e2e2e;"><u class="w">Cuộn</u></span>
<span class="t" style="left:446.1px;top:337.6px;font-size:13.5px;line-height:18px;color:#2e2e2e;transform:scaleX(0.891);-webkit-text-stroke:0.25px #2e2e2e;">10</span>
<span class="t" style="left:541.75px;top:337.6px;font-size:13.5px;line-height:18px;color:#2e2e2e;transform:scaleX(0.916);-webkit-text-stroke:0.25px #2e2e2e;">11.000</span>
<span class="t" style="left:654.1px;top:337.6px;font-size:13.5px;line-height:18px;color:#2e2e2e;transform:scaleX(0.913);-webkit-text-stroke:0.25px #2e2e2e;">110000</span>
<span class="t" style="left:341.8px;top:356.3px;font-size:13.5px;line-height:18px;color:#2e2e2e;transform:scaleX(0.888);-webkit-text-stroke:0.25px #2e2e2e;"><u class="w">Hộp</u></span>
<span class="t" style="left:446.1px;top:356.3px;font-size:13.5px;line-height:18px;color:#2e2e2e;transform:scaleX(0.891);-webkit-text-stroke:0.25px #2e2e2e;">10</span>
<span class="t" style="left:545.1px;top:356.3px;font-size:13.5px;line-height:18px;color:#2e2e2e;transform:scaleX(0.894);-webkit-text-stroke:0.25px #2e2e2e;">2.500</span>
<span class="t" style="left:657.45px;top:356.3px;font-size:13.5px;line-height:18px;color:#2e2e2e;transform:scaleX(0.892);-webkit-text-stroke:0.25px #2e2e2e;">25000</span>
<span class="t" style="left:343.05px;top:375.1px;font-size:13.5px;line-height:18px;color:#2e2e2e;transform:scaleX(0.812);-webkit-text-stroke:0.25px #2e2e2e;"><u class="w">Cây</u></span>
<span class="t" style="left:446.1px;top:375.1px;font-size:13.5px;line-height:18px;color:#2e2e2e;transform:scaleX(0.891);-webkit-text-stroke:0.25px #2e2e2e;">15</span>
<span class="t" style="left:545.1px;top:375.1px;font-size:13.5px;line-height:18px;color:#2e2e2e;transform:scaleX(0.894);-webkit-text-stroke:0.25px #2e2e2e;">9.000</span>
<span class="t" style="left:654.1px;top:375.1px;font-size:13.5px;line-height:18px;color:#2e2e2e;transform:scaleX(0.892);-webkit-text-stroke:0.25px #2e2e2e;">135000</span>
<span class="t" style="left:341.8px;top:393.8px;font-size:13.5px;line-height:18px;color:#2e2e2e;transform:scaleX(0.888);-webkit-text-stroke:0.25px #2e2e2e;"><u class="w">Hộp</u></span>
<span class="t" style="left:449.45px;top:393.8px;font-size:13.5px;line-height:18px;color:#2e2e2e;transform:scaleX(0.891);-webkit-text-stroke:0.25px #2e2e2e;">5</span>
<span class="t" style="left:541.75px;top:393.8px;font-size:13.5px;line-height:18px;color:#2e2e2e;transform:scaleX(0.894);-webkit-text-stroke:0.25px #2e2e2e;">12.000</span>
<span class="t" style="left:657.45px;top:393.8px;font-size:13.5px;line-height:18px;color:#2e2e2e;transform:scaleX(0.892);-webkit-text-stroke:0.25px #2e2e2e;">60000</span>
<span class="t" style="left:449.45px;top:412.8px;font-size:13.5px;line-height:18px;color:#2e2e2e;transform:scaleX(0.891);-webkit-text-stroke:0.25px #2e2e2e;">5</span>
<span class="t" style="left:541.75px;top:412.8px;font-size:13.5px;line-height:18px;color:#2e2e2e;transform:scaleX(0.916);-webkit-text-stroke:0.25px #2e2e2e;">11.000</span>
<span class="t" style="left:657.45px;top:412.8px;font-size:13.5px;line-height:18px;color:#2e2e2e;transform:scaleX(0.892);-webkit-text-stroke:0.25px #2e2e2e;">55000</span>
<div class="a" style="left:730px;top:430.5px;width:3.5px;height:4.5px;background:#fff;border:1px solid #aab;"></div>
<div class="a" style="left:732px;top:434px;width:38px;height:17px;background:#fdfdf0;border:1px solid #d0d0c4;"></div>
<svg style="left:736px;top:436px" width="11" height="12" viewBox="0 0 11 12"><rect x="0.6" y="1.8" width="8.5" height="9.5" rx="1" fill="#f3dc9c" stroke="#c9a85a" stroke-width="1"/><rect x="3" y="0.4" width="3.6" height="2.6" rx="0.8" fill="#777"/><rect x="4.5" y="6" width="6" height="5.5" fill="#fff" stroke="#888" stroke-width="0.9"/></svg>
<span class="t" style="left:750px;top:435.5px;font-size:11px;line-height:14px;color:#666;transform:scaleX(1.023);">(Ctrl)</span>
<div class="a" style="left:89.5px;top:150.5px;width:241.0px;height:52.0px;background:#fff;border:1px solid #d9d9d9;box-shadow:0 1px 3px rgba(0,0,0,0.12);"></div>
<div class="a" style="left:93px;top:155.5px;width:79px;height:20.0px;background:#fff;border:1px solid #c6c6c6;"></div>
<div class="a" style="left:172px;top:155.5px;width:33.5px;height:20.0px;background:#fff;border:1px solid #c6c6c6;"></div>
<div class="a" style="left:261px;top:155px;width:1px;height:43px;background:#e2e2e2;"></div>
<div class="a" style="left:232px;top:177.5px;width:18.5px;height:20.0px;background:#c5d7f1;"></div>
<div class="a" style="left:163.5px;top:163.75px;width:0;height:0;border-top:2.5px solid #666;border-left:2.5px solid transparent;border-right:2.5px solid transparent;"></div>
<div class="a" style="left:196.3px;top:163.75px;width:0;height:0;border-top:2.5px solid #666;border-left:2.5px solid transparent;border-right:2.5px solid transparent;"></div>
<span class="t" style="left:210.7px;top:157.0px;font-size:13px;line-height:17px;color:#555;transform:scaleX(0.957);">A</span>
<svg style="left:218px;top:160px" width="4" height="3" viewBox="0 0 4 3"><path d="M0 3 L2 0 L4 3z" fill="#555"/></svg>
<span class="t" style="left:229.8px;top:160.0px;font-size:10.5px;line-height:14px;color:#555;transform:scaleX(1.026);">A</span>
<svg style="left:236.5px;top:162.5px" width="4" height="3" viewBox="0 0 4 3"><path d="M0 0 L4 0 L2 3z" fill="#555"/></svg>
<svg style="left:244.5px;top:159.5px" width="14" height="12" viewBox="0 0 14 12"><path d="M0.5 7.5 L5 3.5 L8.5 7 L4 11.2z" fill="#eecf8f" stroke="#c9a55c" stroke-width="0.8"/><path d="M6.5 4.5 L8.5 2.8 L10.3 4.6 L8.6 6.5z" fill="#777"/><path d="M9.3 3.6 L12.5 0.8" stroke="#555" stroke-width="2.2" stroke-linecap="round"/></svg>
<svg style="left:267.5px;top:157px" width="18" height="18" viewBox="0 0 18 18"><rect x="0.5" y="0.5" width="17" height="17" fill="#fff" stroke="#8f9bb0" stroke-width="1"/><path d="M4.5 0.5 V17.5" stroke="#8f9bb0" stroke-width="1"/><path d="M8.5 0.5 V17.5" stroke="#8f9bb0" stroke-width="1"/><path d="M13.5 0.5 V17.5" stroke="#8f9bb0" stroke-width="1"/><path d="M0.5 4.5 H17.5" stroke="#8f9bb0" stroke-width="1"/><path d="M0.5 8.5 H17.5" stroke="#8f9bb0" stroke-width="1"/><path d="M0.5 13.5 H17.5" stroke="#8f9bb0" stroke-width="1"/><rect x="1" y="9.5" width="16" height="4.5" fill="#9db7de" opacity="0.9"/><path d="M9 11 V15 M7 13.5 L9 15.8 L11 13.5" stroke="#3e68a8" stroke-width="1.3" fill="none"/></svg>
<div class="a" style="left:286.8px;top:164.25px;width:0;height:0;border-top:2.5px solid #666;border-left:2.5px solid transparent;border-right:2.5px solid transparent;"></div>
<svg style="left:301.5px;top:157px" width="18" height="18" viewBox="0 0 18 18"><rect x="0.5" y="0.5" width="17" height="17" fill="#fff" stroke="#a9a9b8" stroke-width="1"/><path d="M4.5 0.5 V17.5" stroke="#a9a9b8" stroke-width="1"/><path d="M8.5 0.5 V17.5" stroke="#a9a9b8" stroke-width="1"/><path d="M13.5 0.5 V17.5" stroke="#a9a9b8" stroke-width="1"/><path d="M0.5 4.5 H17.5" stroke="#a9a9b8" stroke-width="1"/><path d="M0.5 8.5 H17.5" stroke="#a9a9b8" stroke-width="1"/><path d="M0.5 13.5 H17.5" stroke="#a9a9b8" stroke-width="1"/><path d="M10 10.5 L17.5 17.5 M17.5 10.5 L10 17.5" stroke="#e0542c" stroke-width="2.2"/></svg>
<div class="a" style="left:321.2px;top:164.25px;width:0;height:0;border-top:2.5px solid #666;border-left:2.5px solid transparent;border-right:2.5px solid transparent;"></div>
<div class="a" style="left:133.3px;top:184.0px;width:10.5px;height:1.0px;background:#777;"></div>
<div class="a" style="left:133.3px;top:189.0px;width:10.5px;height:1.0px;background:#777;"></div>
<div class="a" style="left:135.5px;top:186.5px;width:6.0px;height:1.0px;background:#777;"></div>
<div class="a" style="left:135.5px;top:191.5px;width:6.0px;height:1.0px;background:#777;"></div>
<span class="t" style="left:150.5px;top:180.0px;font-size:8px;line-height:10px;color:#555;transform:scaleX(0.842);">ab</span>
<svg style="left:155px;top:180.5px" width="9" height="11" viewBox="0 0 9 11"><path d="M8 0.5 L2 9.5" stroke="#555" stroke-width="2"/></svg>
<div class="a" style="left:149px;top:191.5px;width:15px;height:3.5px;background:#f5ee3c;"></div>
<div class="a" style="left:167.5px;top:185.75px;width:0;height:0;border-top:2.5px solid #666;border-left:2.5px solid transparent;border-right:2.5px solid transparent;"></div>
<span class="t" style="left:181.3px;top:179.5px;font-size:10.5px;line-height:14px;color:#555;transform:scaleX(1.098);">A</span>
<div class="a" style="left:178px;top:191px;width:13.699999999999989px;height:3.3000000000000114px;background:#d6232a;"></div>
<div class="a" style="left:195.8px;top:185.75px;width:0;height:0;border-top:2.5px solid #666;border-left:2.5px solid transparent;border-right:2.5px solid transparent;"></div>
<svg style="left:206.5px;top:181px" width="14" height="14" viewBox="0 0 14 14"><path d="M3.5 5.5 L7.5 1.5 L11.5 5.8 L7 10 z" fill="#fff" stroke="#666" stroke-width="1"/><path d="M6 3 V0.8 Q7 -0.2 8 0.8 V4" stroke="#666" fill="none" stroke-width="0.9"/><path d="M11.5 5.8 Q13.5 8 12.2 9.5 Q11 8.5 11.5 5.8z" fill="#666"/><rect x="0.5" y="10.8" width="13" height="2.4" fill="#f4f4f4" stroke="#888" stroke-width="0.8"/></svg>
<div class="a" style="left:224.0px;top:185.75px;width:0;height:0;border-top:2.5px solid #666;border-left:2.5px solid transparent;border-right:2.5px solid transparent;"></div>
<svg style="left:235.5px;top:182px" width="11" height="11" viewBox="0 0 11 11"><rect x="0.5" y="0.5" width="10" height="10" fill="#fff" stroke="#aab4c4" stroke-width="1" stroke-dasharray="1 1"/><path d="M5.5 1 V10 M1 5.5 H10" stroke="#8d99ad" stroke-width="1" stroke-dasharray="1 1"/></svg>
<div class="a" style="left:252.0px;top:185.6px;width:0;height:0;border-top:2.8px solid #444;border-left:2.8px solid transparent;border-right:2.8px solid transparent;"></div>
<span class="t" style="left:98px;top:180.5px;font-size:10.5px;line-height:14px;color:#444;transform:scaleX(0.882);font-weight:bold;">B</span>
<span class="t" style="left:117px;top:179.5px;font-size:12px;line-height:16px;color:#444;transform:scaleX(1.000);font-style:italic;font-weight:bold;font-family:'Liberation Serif',serif;">I</span>
<span class="t" style="left:265.5px;top:180.0px;font-size:10.5px;line-height:14px;color:#666;transform:scaleX(0.895);">Insert</span>
<span class="t" style="left:297px;top:180.0px;font-size:10.5px;line-height:14px;color:#666;transform:scaleX(0.889);">Delete</span>
<div class="a" style="left:89.5px;top:215px;width:162.5px;height:289.5px;background:#fff;border:1px solid #d0d0d0;box-shadow:1px 1px 3px rgba(0,0,0,0.15);"></div>
<div class="a" style="left:111px;top:257px;width:140px;height:19px;background:#efefef;"></div>
<div class="a" style="left:112px;top:382px;width:139px;height:1px;background:#e6e6e6;"></div>
<div class="a" style="left:112px;top:483px;width:139px;height:1px;background:#e6e6e6;"></div>
<div class="a" style="left:88.7px;top:400.7px;width:163.3px;height:26.0px;background:#d3dcf1;border:2.6px solid #b71f27;"></div>
<span class="t" style="left:117.5px;top:220.0px;font-size:11px;line-height:14px;color:#626262;transform:scaleX(0.876);">Cu<u>t</u></span>
<span class="t" style="left:117.5px;top:239.5px;font-size:11px;line-height:14px;color:#626262;transform:scaleX(0.875);"><u>C</u>opy</span>
<span class="t" style="left:117.5px;top:259.5px;font-size:11px;line-height:14px;color:#666;transform:scaleX(0.844);font-weight:bold;">Paste Options:</span>
<span class="t" style="left:117.5px;top:305.0px;font-size:11px;line-height:14px;color:#626262;transform:scaleX(0.835);"><u>I</u>nsert</span>
<span class="t" style="left:117.5px;top:325.0px;font-size:11px;line-height:14px;color:#626262;transform:scaleX(0.861);">Delete <u>T</u>able</span>
<span class="t" style="left:117.5px;top:345.0px;font-size:11px;line-height:14px;color:#626262;transform:scaleX(0.862);">Distribute Rows Eve<u>n</u>ly</span>
<span class="t" style="left:117.5px;top:365.0px;font-size:11px;line-height:14px;color:#626262;transform:scaleX(0.880);">Distribute Columns Evenl<u>y</u></span>
<span class="t" style="left:117.5px;top:386.5px;font-size:11px;line-height:14px;color:#626262;transform:scaleX(0.840);"><u>B</u>order Styles</span>
<span class="t" style="left:117.5px;top:407.0px;font-size:11px;line-height:14px;color:#626262;transform:scaleX(0.904);"><u>A</u>utoFit</span>
<span class="t" style="left:117.5px;top:426.0px;font-size:11px;line-height:14px;color:#626262;transform:scaleX(0.890);">Te<u>x</u>t Direction...</span>
<span class="t" style="left:117.5px;top:446.0px;font-size:11px;line-height:14px;color:#626262;transform:scaleX(0.875);">Insert <u>C</u>aption...</span>
<span class="t" style="left:117.5px;top:466.0px;font-size:11px;line-height:14px;color:#626262;transform:scaleX(0.863);">Table P<u>r</u>operties...</span>
<span class="t" style="left:117.5px;top:486.3px;font-size:11px;line-height:14px;color:#626262;transform:scaleX(0.914);">New Co<u>m</u>ment</span>
<div class="a" style="left:240px;top:309px;width:0;height:0;border-left:3.5px solid #666;border-top:3px solid transparent;border-bottom:3px solid transparent;"></div>
<div class="a" style="left:240px;top:390px;width:0;height:0;border-left:3.5px solid #666;border-top:3px solid transparent;border-bottom:3px solid transparent;"></div>
<div class="a" style="left:240px;top:410px;width:0;height:0;border-left:3.5px solid #666;border-top:3px solid transparent;border-bottom:3px solid transparent;"></div>
<div class="a" style="left:85.5px;top:211px;width:10.5px;height:10px;background:#fff;border:1px solid #c9d0d0;"></div>
<svg style="left:87px;top:212.5px" width="6" height="5" viewBox="0 0 6 5"><path d="M0.5 4.2 L5 0.8 M5.2 0.6 H3 M5.2 0.6 V2.6" stroke="#444" stroke-width="1.3" fill="none"/></svg>
<svg style="left:95px;top:221.5px" width="12" height="11" viewBox="0 0 12 11"><path d="M3.5 0 L8 7 M8.5 0 L4 7" stroke="#555" stroke-width="1.1" fill="none"/><circle cx="2.6" cy="8.4" r="2" fill="none" stroke="#4a72b5" stroke-width="1.2"/><circle cx="9.4" cy="8.4" r="2" fill="none" stroke="#4a72b5" stroke-width="1.2"/></svg>
<svg style="left:94.3px;top:241.5px" width="13" height="11" viewBox="0 0 13 11"><rect x="0.5" y="0.5" width="6.5" height="8" fill="#fff" stroke="#7d8aa0"/><path d="M2 3 H5.5 M2 5 H5.5" stroke="#9aa" stroke-width="0.8"/><path d="M5.5 2.5 H10 L12.5 5 V10.5 H5.5z" fill="#fff" stroke="#7d8aa0"/><path d="M7 6 H11 M7 8 H11" stroke="#9aa" stroke-width="0.8"/></svg>
<svg style="left:95px;top:260px" width="13" height="13" viewBox="0 0 13 13"><rect x="0.7" y="2.5" width="9" height="10" rx="1" fill="#f0d08c" stroke="#e0b766" stroke-width="1.2"/><rect x="3.2" y="0.6" width="4" height="3" rx="1" fill="#777"/><path d="M6 6.5 H10 L12.3 8.8 V12.5 H6z" fill="#fff" stroke="#777" stroke-width="0.9"/></svg>
<svg style="left:116px;top:279px" width="19" height="20" viewBox="0 0 19 20"><rect x="0.7" y="2.5" width="11.6" height="14" rx="1" fill="#fffdf6" stroke="#e4c88f" stroke-width="1.5"/><path d="M3.0 3.8 V2.6 H5.0 Q6.5 -1 8.0 2.6 H10.0 V3.8z" fill="#666"/><g transform="translate(7,9.5)"><rect x="0.5" y="0.5" width="10" height="9" fill="#fff" stroke="#666" stroke-width="1"/><path d="M5.5 0.5 V9.5" stroke="#666" stroke-width="1"/><path d="M0.5 3.5 H10.5" stroke="#666" stroke-width="1"/><path d="M0.5 6.5 H10.5" stroke="#666" stroke-width="1"/></g></svg>
<svg style="left:141px;top:279px" width="19" height="20" viewBox="0 0 19 20"><rect x="0.7" y="2.5" width="11.6" height="14" rx="1" fill="#fffdf6" stroke="#e4c88f" stroke-width="1.5"/><path d="M3.0 3.8 V2.6 H5.0 Q6.5 -1 8.0 2.6 H10.0 V3.8z" fill="#666"/><g transform="translate(6,7.5)"><rect x="0.5" y="0.5" width="10.5" height="4.5" fill="#fff" stroke="#4f6f9f" stroke-width="1"/><path d="M4.5 0.5 V5.0" stroke="#4f6f9f" stroke-width="1"/><path d="M7.5 0.5 V5.0" stroke="#4f6f9f" stroke-width="1"/></g><g transform="translate(6,14)"><rect x="0.5" y="0.5" width="10.5" height="4.5" fill="#fff" stroke="#4f6f9f" stroke-width="1"/><path d="M4.5 0.5 V5.0" stroke="#4f6f9f" stroke-width="1"/><path d="M7.5 0.5 V5.0" stroke="#4f6f9f" stroke-width="1"/></g></svg>
<svg style="left:166px;top:279px" width="19" height="20" viewBox="0 0 19 20"><rect x="0.7" y="2.5" width="11.6" height="14" rx="1" fill="#fffdf6" stroke="#e4c88f" stroke-width="1.5"/><path d="M3.0 3.8 V2.6 H5.0 Q6.5 -1 8.0 2.6 H10.0 V3.8z" fill="#666"/><g transform="translate(6,8)"><rect x="0.5" y="0.5" width="10.5" height="10" fill="#3f74c4" stroke="#dfe8f6" stroke-width="1"/><path d="M4.5 0.5 V10.5" stroke="#dfe8f6" stroke-width="1"/><path d="M7.5 0.5 V10.5" stroke="#dfe8f6" stroke-width="1"/><path d="M0.5 5.5 H11.0" stroke="#dfe8f6" stroke-width="1"/></g></svg>
<svg style="left:191px;top:279px" width="19" height="20" viewBox="0 0 19 20"><rect x="0.7" y="2.5" width="11.6" height="14" rx="1" fill="#fffdf6" stroke="#e4c88f" stroke-width="1.5"/><path d="M3.0 3.8 V2.6 H5.0 Q6.5 -1 8.0 2.6 H10.0 V3.8z" fill="#666"/><text x="7.5" y="19.5" font-size="12" font-weight="bold" fill="#555" font-family="Liberation Sans, sans-serif">A</text></svg>
<div class="a" style="left:112px;top:302.5px;width:139px;height:0.8000000000000114px;background:#f0f0f0;"></div>
<svg style="left:95px;top:326.5px" width="13" height="12" viewBox="0 0 13 12"><rect x="0.5" y="0.5" width="9" height="9" fill="#fff" stroke="#9aa3b5" stroke-width="1"/><path d="M3.5 0.5 V9.5" stroke="#9aa3b5" stroke-width="1"/><path d="M6.5 0.5 V9.5" stroke="#9aa3b5" stroke-width="1"/><path d="M0.5 3.5 H9.5" stroke="#9aa3b5" stroke-width="1"/><path d="M0.5 6.5 H9.5" stroke="#9aa3b5" stroke-width="1"/><path d="M6 6 L12.5 12 M12.5 6 L6 12" stroke="#e0542c" stroke-width="1.8"/></svg>
<svg style="left:94.3px;top:346px" width="14" height="12" viewBox="0 0 14 12"><path d="M0.5 0.5 H9.5 V11.5 H0.5z M0.5 6 H9.5 M5 0.5 V11.5" stroke="#6f86a8" stroke-width="1.1" fill="none"/><path d="M12 0.5 V11.5 M10.3 2.5 L12 0.5 L13.7 2.5 M10.3 9.5 L12 11.5 L13.7 9.5" stroke="#4a78b8" stroke-width="1" fill="none"/></svg>
<svg style="left:94.7px;top:365px" width="12" height="13" viewBox="0 0 12 13"><path d="M0.5 3.5 H11.5 V12.5 H0.5z M0.5 8 H11.5 M6 3.5 V12.5" stroke="#6f86a8" stroke-width="1.1" fill="none"/><path d="M0.5 1.2 H11.5 M2.2 0 L0.5 1.2 L2.2 2.5 M9.8 0 L11.5 1.2 L9.8 2.5" stroke="#4a78b8" stroke-width="1" fill="none"/></svg>
<svg style="left:94.7px;top:427.5px" width="13" height="12" viewBox="0 0 13 12"><path d="M1 1 V11.5 M3.5 1 V11.5 M6 4 V11.5 M8.5 6 V11.5 M11 6 V11.5" stroke="#666" stroke-width="1"/><text x="6" y="6" font-size="7" font-weight="bold" fill="#667" font-family="Liberation Sans, sans-serif">A</text></svg>
<svg style="left:95px;top:446.5px" width="12" height="13" viewBox="0 0 12 13"><rect x="0.6" y="0.6" width="10.8" height="11.8" fill="#fff" stroke="#8a8a8a" stroke-width="1.2"/><rect x="3" y="3" width="5" height="5" fill="#fbe6e6" stroke="#d98a8a" stroke-width="1"/></svg>
<svg style="left:94.3px;top:466.5px" width="14" height="13" viewBox="0 0 14 13"><rect x="0.5" y="0.5" width="9" height="8" fill="#fff" stroke="#777"/><rect x="0.5" y="0.5" width="9" height="2.2" fill="#555"/><path d="M3.5 2.5 V8.5 M0.5 5.5 H9.5" stroke="#999" stroke-width="0.8"/><rect x="5.5" y="5.5" width="8" height="7" fill="#fff" stroke="#6f86a8"/><rect x="5.5" y="5.5" width="8" height="2" fill="#6f86a8"/><path d="M7 9.5 H12 M7 11 H12" stroke="#9ab" stroke-width="0.7"/></svg>
<svg style="left:95px;top:488px" width="13" height="12" viewBox="0 0 13 12"><path d="M1.5 2 H12 V8.5 L9 11.3 H1.5z" fill="#fff" stroke="#777" stroke-width="1.1"/><path d="M12 8.5 H9 V11.3" fill="none" stroke="#777" stroke-width="0.9"/><path d="M1.5 0 V4 M-0.5 2 H3.5" stroke="#e8c24a" stroke-width="1.3"/></svg>
<div class="a" style="left:81px;top:206.5px;width:21.700000000000003px;height:19.5px;background:transparent;border:2.6px solid #b71f27;"></div>
<div class="a" style="left:251px;top:403px;width:138.5px;height:62px;background:#fff;border:1px solid #d0d0d0;box-shadow:1px 1px 3px rgba(0,0,0,0.15);"></div>
<div class="a" style="left:252px;top:423.7px;width:138px;height:22.5px;background:#d3dcf1;border:2.6px solid #b71f27;"></div>
<svg style="left:255.5px;top:408.5px" width="15" height="13" viewBox="0 0 15 13"><path d="M0.5 1 V5 M14 1 V5 M2 3 L4.5 1.5 V4.5z M12.5 3 L10 1.5 V4.5z M5.5 1.2 V4.8 M9 1.2 V4.8" stroke="#777" stroke-width="0.9" fill="#777"/><rect x="0.5" y="6.5" width="13.5" height="2.6" fill="#555"/><path d="M0.5 9 V12.5 M5 9 V12.5 M9.5 9 V12.5 M14 9 V12.5 M0.5 12.5 H14" stroke="#999" stroke-width="0.9" fill="none"/></svg>
<svg style="left:255.5px;top:428px" width="15" height="13" viewBox="0 0 15 13"><path d="M0.5 1 V5 M14 1 V5" stroke="#777" stroke-width="0.9"/><path d="M4 0.5 L7.2 3.5 M10.5 0.5 L7.2 3.5" stroke="#4a78b8" stroke-width="1.1"/><rect x="0.5" y="5" width="13.5" height="3.2" fill="#4a78b8"/><path d="M0.5 8 V12 M5 8 V12 M9.5 8 V12 M14 8 V12 M0.5 10 H14 M0.5 12 H14" stroke="#7f93b5" stroke-width="0.9" fill="none"/></svg>
<svg style="left:255.5px;top:448.5px" width="15" height="13" viewBox="0 0 15 13"><path d="M0.5 0.5 V5 M14 0.5 V5 M0.5 2.5 H14" stroke="#6f86a8" stroke-width="0.9"/><rect x="0.5" y="4.5" width="13.5" height="3.2" fill="#4a78b8"/><path d="M0.5 7.5 V11.5 M5 7.5 V11.5 M9.5 7.5 V11.5 M14 7.5 V11.5 M0.5 9.5 H14 M0.5 11.5 H14" stroke="#7f93b5" stroke-width="0.9" fill="none"/></svg>
<span class="t" style="left:279px;top:407.5px;font-size:11px;line-height:14px;color:#626262;transform:scaleX(0.902);">Auto<u>F</u>it to Contents</span>
<span class="t" style="left:279px;top:427.5px;font-size:11px;line-height:14px;color:#626262;transform:scaleX(0.918);">AutoFit to <u>W</u>indow</span>
<span class="t" style="left:279px;top:447.5px;font-size:11px;line-height:14px;color:#626262;transform:scaleX(0.904);">Fi<u>x</u>ed Column Width</span>
</div></body></html>
